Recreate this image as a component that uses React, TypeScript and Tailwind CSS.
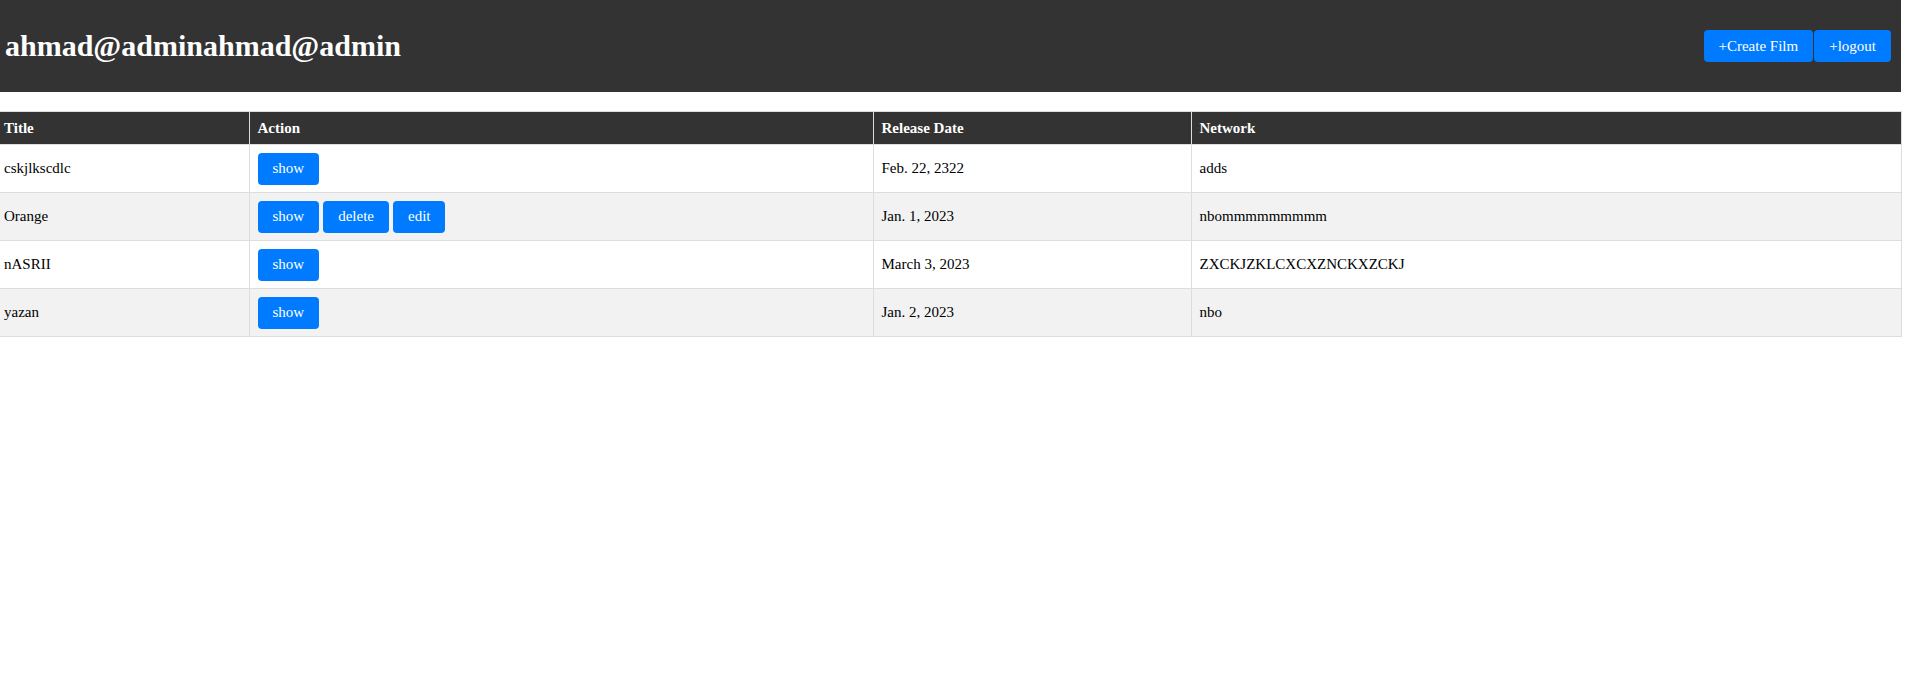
import React from 'react'

type Film = {
  title: string
  canEdit: boolean
  releaseDate: string
  network: string
}

const films: Film[] = [
  { title: 'cskjlkscdlc', canEdit: false, releaseDate: 'Feb. 22, 2322', network: 'adds' },
  { title: 'Orange', canEdit: true, releaseDate: 'Jan. 1, 2023', network: 'nbommmmmmmmm' },
  { title: 'nASRII', canEdit: false, releaseDate: 'March 3, 2023', network: 'ZXCKJZKLCXCXZNCKXZCKJ' },
  { title: 'yazan', canEdit: false, releaseDate: 'Jan. 2, 2023', network: 'nbo' },
]

const Btn = ({ children }: { children: React.ReactNode }) => (
  <button className="h-[32px] px-[15px] rounded-[4px] bg-[#007bff] text-white text-[15px] leading-none">
    {children}
  </button>
)

const App = () => {
  return (
    <div className="w-[1901px] min-h-[684px] bg-white text-black text-[15px] font-['Liberation_Serif','Times_New_Roman',serif]">
      <header className="h-[92px] bg-[#333] flex items-center justify-between pl-[5px] pr-[10px]">
        <h1 className="text-white text-[30px] font-bold leading-none">ahmad@adminahmad@admin</h1>
        <div className="flex gap-px">
          <Btn>+Create Film</Btn>
          <Btn>+logout</Btn>
        </div>
      </header>

      <table className="mt-[19px] w-[1901px] table-fixed border-collapse">
        <colgroup>
          <col className="w-[249px]" />
          <col className="w-[624px]" />
          <col className="w-[318px]" />
          <col className="w-[710px]" />
        </colgroup>
        <thead>
          <tr className="bg-[#333] text-white h-[33px]">
            <th className="text-left font-bold border border-[#ddd] border-l-0 pl-[4px] pr-[8px] py-0">Title</th>
            <th className="text-left font-bold border border-[#ddd] px-[8px] py-0">Action</th>
            <th className="text-left font-bold border border-[#ddd] px-[8px] py-0">Release Date</th>
            <th className="text-left font-bold border border-[#ddd] px-[8px] py-0">Network</th>
          </tr>
        </thead>
        <tbody>
          {films.map((f, i) => (
            <tr key={f.title} className={`h-[48px] ${i % 2 === 1 ? 'bg-[#f2f2f2]' : 'bg-white'}`}>
              <td className="border border-[#ddd] border-l-0 pl-[4px] pr-[8px] py-0">{f.title}</td>
              <td className="border border-[#ddd] px-[8px] py-0">
                <div className="flex gap-[4px]">
                  <Btn>show</Btn>
                  {f.canEdit && <Btn>delete</Btn>}
                  {f.canEdit && <Btn>edit</Btn>}
                </div>
              </td>
              <td className="border border-[#ddd] px-[8px] py-0">{f.releaseDate}</td>
              <td className="border border-[#ddd] px-[8px] py-0">{f.network}</td>
            </tr>
          ))}
        </tbody>
      </table>
    </div>
  )
}

export default App
